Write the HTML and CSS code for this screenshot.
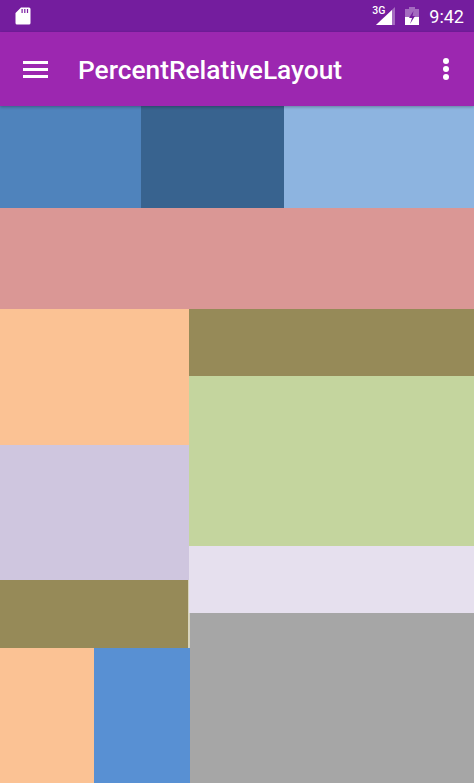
FILE: index.html
```
<!DOCTYPE html>
<html lang="en">
<head>
    <meta charset="UTF-8">
    <meta name="viewport" content="width=device-width, initial-scale=1.0">
    <title>PercentRelativeLayout</title>
    <link rel="stylesheet" href="styles.css">
</head>
<body>
    <div class="status-bar">
        <svg class="sd-icon" width="16" height="18" viewBox="0 0 16 18">
            <path d="M6 0.5H14a1.500 1.500 0 0 1 1.500 1.500V16a1.500 1.500 0 0 1-1.500 1.500H2A1.500 1.500 0 0 1 .5 16V6z" fill="#fff"/>
            <path d="M6.500 2h1.200v4H6.500zM9.200 2h1.200v4H9.200zM11.900 2h1.200v4h-1.200z" fill="#7b1fa2"/>
        </svg>
        <div class="status-right">
            <div class="signal">
                <span class="signal-label">3G</span>
                <svg width="19" height="18" viewBox="0 0 19 18">
                    <path d="M19 0V18H0z" fill="#fff" fill-opacity="0.35"/>
                    <path d="M16 3V18H0z" fill="#fff"/>
                </svg>
            </div>
            <svg class="battery" width="14" height="18" viewBox="0 0 14 18">
                <path d="M4 0h6v2h4v16H0V2h4z" fill="#fff" fill-opacity="0.35"/>
                <path d="M0 10h14v8H0z" fill="#fff"/>
                <path d="M8.500 4 4 11h3l-2 6 5-8H7.500z" fill="#741d9e"/>
            </svg>
            <span class="clock">9:42</span>
        </div>
    </div>

    <header class="toolbar">
        <svg class="menu-icon" width="25" height="17" viewBox="0 0 25 17">
            <path d="M0 0h25v3H0zM0 7h25v3H0zM0 14h25v3H0z" fill="#fff"/>
        </svg>
        <h1 class="toolbar-title">PercentRelativeLayout</h1>
        <svg class="more-icon" width="8" height="22" viewBox="0 0 8 22">
            <circle cx="4" cy="3" r="3" fill="#fff"/>
            <circle cx="4" cy="11" r="3" fill="#fff"/>
            <circle cx="4" cy="19" r="3" fill="#fff"/>
        </svg>
    </header>

    <main class="content">
        <div class="row-top">
            <div class="blue"></div>
            <div class="dark-blue"></div>
            <div class="light-blue"></div>
        </div>
        <div class="pink-band"></div>
        <div class="columns">
            <div class="col-left">
                <div class="peach first"></div>
                <div class="lilac second"></div>
                <div class="olive third"></div>
                <div class="bottom-pair">
                    <div class="peach"></div>
                    <div class="mid-blue"></div>
                </div>
            </div>
            <div class="col-right">
                <div class="olive short"></div>
                <div class="green big"></div>
                <div class="pale short"></div>
                <div class="gray big"></div>
            </div>
        </div>
    </main>
</body>
</html>
```

FILE: styles.css
```
* {
    margin: 0;
    padding: 0;
    box-sizing: border-box;
}

body {
    width: 474px;
    height: 783px;
    overflow: hidden;
    font-family: Roboto, sans-serif;
    background: #fff;
}

.status-bar {
    height: 32px;
    background: #741d9e;
    display: flex;
    align-items: center;
    justify-content: space-between;
    padding: 0 10px 0 15px;
    color: #fff;
}

.status-right {
    display: flex;
    align-items: center;
}

.signal {
    position: relative;
    width: 19px;
    height: 18px;
    margin-right: 10px;
}

.signal svg {
    display: block;
}

.signal-label {
    position: absolute;
    top: -1px;
    left: -4px;
    font-size: 10.500px;
    font-weight: 500;
    line-height: 10px;
}

.battery {
    margin-right: 10px;
}

.clock {
    font-size: 18px;
    font-weight: 400;
}

.toolbar {
    position: relative;
    z-index: 1;
    height: 74px;
    background: #9c27b0;
    display: flex;
    align-items: center;
    padding: 0 24px 0 23px;
    color: #fff;
    box-shadow: 0 1px 3px rgba(0,0,0,0.3);
}

.toolbar-title {
    flex: 1;
    margin-left: 30px;
    padding-top: 2px;
    font-size: 26.300px;
    font-weight: 500;
}

.content {
    height: 677px;
}

.row-top {
    display: grid;
    grid-template-columns: 141px 143px 190px;
    height: 102px;
}

.pink-band {
    height: 101px;
    background: #da9795;
}

.columns {
    display: grid;
    grid-template-columns: 189px 285px;
    height: 474px;
}

.col-left, .col-right {
    display: flex;
    flex-direction: column;
}

.col-left {
    background: #d8d4bd;
}

.first { height: 136px; }
.second { height: 135px; }
.third { height: 68px; margin-right: 1px; }
.short { height: 67px; }
.big { height: 170px; }

.bottom-pair {
    flex: 1;
    display: grid;
    grid-template-columns: 94px 96px;
    position: relative;
    z-index: 1;
}

.blue { background: #4f83bc; }
.dark-blue { background: #38638f; }
.light-blue { background: #8db4e0; }
.peach { background: #fbc294; }
.lilac { background: #cfc6df; }
.olive { background: #968a58; }
.mid-blue { background: #5890d3; }
.green { background: #c4d59e; }
.pale { background: #e6e0ee; }
.gray { background: #a6a6a6; border-left: 1px solid #d8d4bd; }
```
